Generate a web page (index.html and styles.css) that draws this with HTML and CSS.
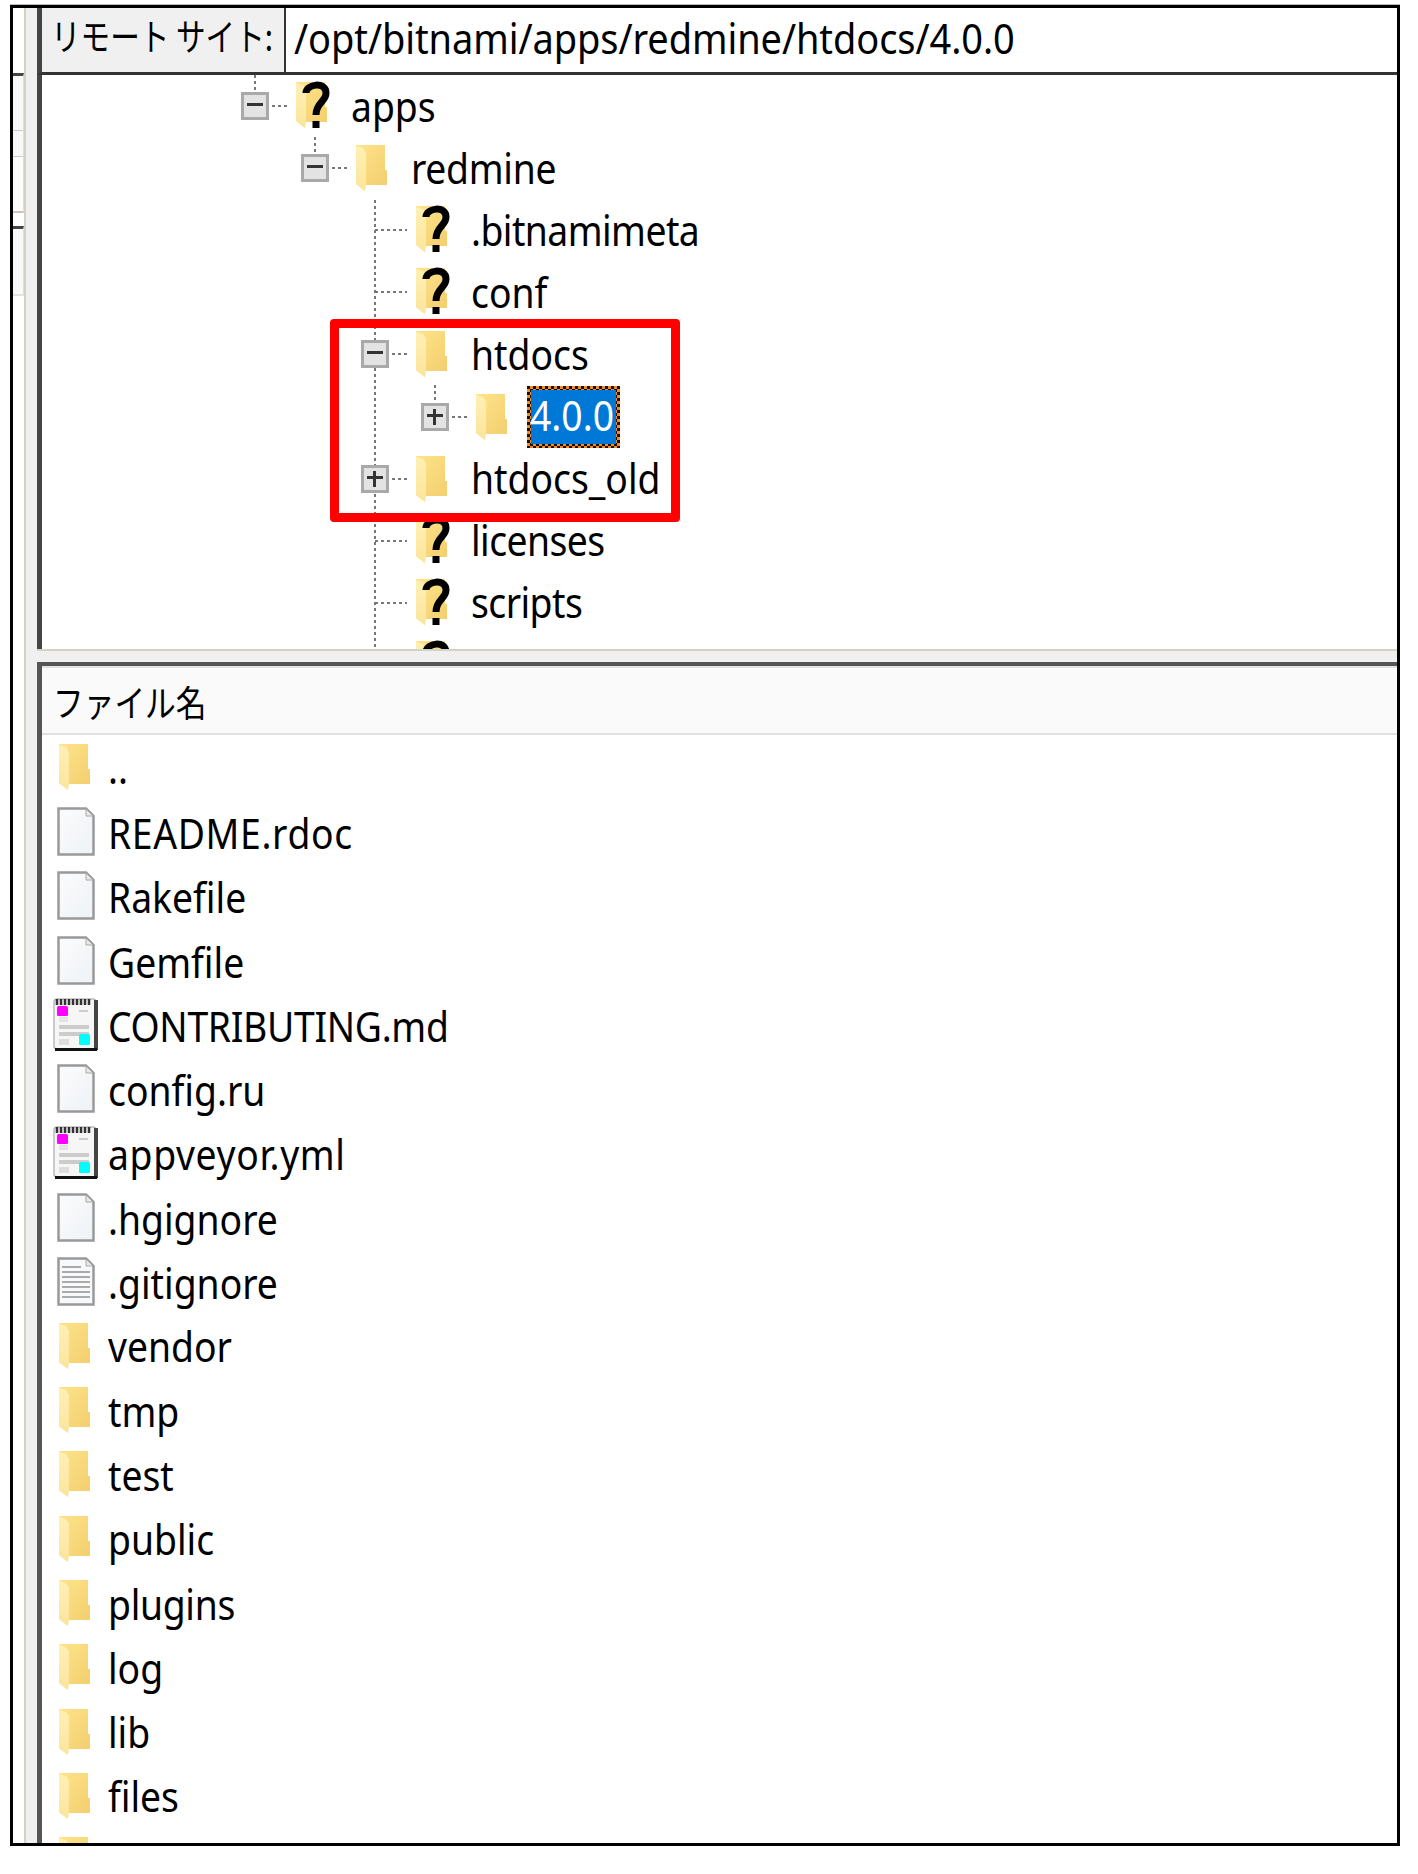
FILE: index.html
```html
<!DOCTYPE html>
<html lang="ja">
<head>
<meta charset="utf-8">
<title>リモート サイト</title>
<link rel="stylesheet" href="styles.css">
</head>
<body>
<svg class="defs" aria-hidden="true">
  <defs>
    <linearGradient id="fg" x1="0" y1="0" x2="1" y2="1">
      <stop offset="0" stop-color="#ffe48c"/>
      <stop offset="1" stop-color="#f2cd6c"/>
    </linearGradient>
    <linearGradient id="pg" x1="0" y1="0" x2="0" y2="1">
      <stop offset="0" stop-color="#fff0b4"/>
      <stop offset="1" stop-color="#fbe59c"/>
    </linearGradient>
    <linearGradient id="docg" x1="0" y1="0" x2="1" y2="1">
      <stop offset="0" stop-color="#fbfcfd"/>
      <stop offset="1" stop-color="#eef2f6"/>
    </linearGradient>
    <symbol id="folder" viewBox="0 0 31 46">
      <path d="M0 0H29V25H31V40H9V46L0 39Z" fill="url(#fg)"/>
      <path d="M0 1L7 3L10 8V40L9 46L0 39Z" fill="url(#pg)"/>
    </symbol>
    <symbol id="qfolder" viewBox="0 0 36 50">
      <path d="M0 1H29V26H31V41H9V47L0 40Z" fill="url(#fg)"/>
      <path d="M0 2L7 4L10 9V41L9 47L0 40Z" fill="url(#pg)"/>
      <path d="M10 12C10 3 30 0 30 12C30 21 20 21 20 34" fill="none" stroke="#000" stroke-width="7"/>
      <rect x="16.500" y="40" width="7" height="7" fill="#000"/>
    </symbol>
    <symbol id="file" viewBox="0 0 38 49">
      <path d="M1.500 1.500H29L36.500 9V47.500H1.500Z" fill="url(#docg)" stroke="#999" stroke-width="2.500"/>
      <path d="M29 2V9H36Z" fill="#e8e8e8" stroke="#aaa" stroke-width="1"/>
    </symbol>
    <symbol id="textfile" viewBox="0 0 38 49">
      <path d="M1.500 1.500H29L36.500 9V47.500H1.500Z" fill="#f8f9fb" stroke="#999" stroke-width="2.500"/>
      <path d="M29 2V9H36Z" fill="#e8e8e8" stroke="#aaa" stroke-width="1"/>
      <path d="M5 10H24M5 15H33M5 20H33M5 25H33M5 30H33M5 35H33M5 40H33" stroke="#aaa" stroke-width="2" fill="none"/>
    </symbol>
    <symbol id="note" viewBox="0 0 45 53">
      <rect x="1" y="1" width="42" height="50" rx="3" fill="#f6f6f6" stroke="#bbb" stroke-width="1.500"/>
      <path d="M41 2H45V52H41Z" fill="#444"/>
      <path d="M2 50H44V53H2Z" fill="#111"/>
      <path d="M4 1V7M8 1V7M12 1V7M16 1V7M20 1V7M24 1V7M28 1V7M32 1V7M36 1V7" stroke="#333" stroke-width="2.500"/>
      <path d="M26 13H35" stroke="#ccc" stroke-width="2"/>
      <rect x="6" y="19" width="9" height="5" fill="#e4e4e4"/>
      <rect x="6" y="27" width="30" height="4" fill="#ccc"/>
      <rect x="6" y="34" width="30" height="4" fill="#ccc"/>
      <rect x="6" y="41" width="10" height="6" fill="#ddd"/>
      <rect x="4" y="8" width="11" height="10" rx="1.500" fill="#ff00ff"/>
      <rect x="26" y="36" width="11" height="11" rx="1.500" fill="#00ffff"/>
    </symbol>
  </defs>
</svg>

<div class="frame">
  <div class="side">
    <div class="side-top"></div>
    <div class="side-cell side-a"></div>
    <div class="side-cell side-b"></div>
    <div class="side-cell side-c"></div>
    <div class="side-gap"></div>
    <div class="side-cell side-d"></div>
  </div>
  <div class="rail"></div>

  <div class="main">
    <div class="pathbar">
      <div class="pathlabel"><span class="txt cjk">リモート サイト:</span></div>
      <div class="pathvalue"><span class="txt path">/opt/bitnami/apps/redmine/htdocs/4.0.0</span></div>
    </div>

    <div class="tree">
      <div class="guide guide-a"></div>
      <div class="guide guide-b"></div>
      <div class="guide guide-c"></div>
      <div class="guide guide-d"></div>

      <div class="node d0"><span class="twist minus"></span><span class="dash"></span><svg class="qicon"><use href="#qfolder"/></svg><span class="txt">apps</span></div>
      <div class="node d1"><span class="twist minus"></span><span class="dash"></span><svg class="ficon"><use href="#folder"/></svg><span class="txt snug">redmine</span></div>
      <div class="node d2"><span class="leaf"></span><svg class="qicon"><use href="#qfolder"/></svg><span class="txt tight">.bitnamimeta</span></div>
      <div class="node d2"><span class="leaf"></span><svg class="qicon"><use href="#qfolder"/></svg><span class="txt">conf</span></div>
      <div class="node d2"><span class="twist minus"></span><span class="dash"></span><svg class="ficon"><use href="#folder"/></svg><span class="txt">htdocs</span></div>
      <div class="node d3"><span class="twist plus"></span><span class="dash"></span><svg class="ficon ficon-sel"><use href="#folder"/></svg><span class="selected"><span class="txt">4.0.0</span></span></div>
      <div class="node d2"><span class="twist plus"></span><span class="dash"></span><svg class="ficon"><use href="#folder"/></svg><span class="txt">htdocs_old</span></div>
      <div class="node d2"><span class="leaf"></span><svg class="qicon"><use href="#qfolder"/></svg><span class="txt tight">licenses</span></div>
      <div class="node d2"><span class="leaf"></span><svg class="qicon"><use href="#qfolder"/></svg><span class="txt tight">scripts</span></div>
      <div class="node d2"><span class="leaf"></span><svg class="qicon"><use href="#qfolder"/></svg></div>

      <div class="callout"></div>
    </div>

    <div class="splitter"></div>

    <div class="list">
      <div class="list-head"><span class="txt cjk head">ファイル名</span></div>
      <div class="rows">
        <div class="row"><svg class="li-folder"><use href="#folder"/></svg><span class="txt">..</span></div>
        <div class="row"><svg class="li-file"><use href="#file"/></svg><span class="txt low wide">README.rdoc</span></div>
        <div class="row"><svg class="li-file"><use href="#file"/></svg><span class="txt low">Rakefile</span></div>
        <div class="row"><svg class="li-file"><use href="#file"/></svg><span class="txt low">Gemfile</span></div>
        <div class="row"><svg class="li-note"><use href="#note"/></svg><span class="txt low snug">CONTRIBUTING.md</span></div>
        <div class="row"><svg class="li-file"><use href="#file"/></svg><span class="txt low">config.ru</span></div>
        <div class="row"><svg class="li-note"><use href="#note"/></svg><span class="txt low wide">appveyor.yml</span></div>
        <div class="row"><svg class="li-file"><use href="#file"/></svg><span class="txt low">.hgignore</span></div>
        <div class="row"><svg class="li-file"><use href="#textfile"/></svg><span class="txt low">.gitignore</span></div>
        <div class="row"><svg class="li-folder"><use href="#folder"/></svg><span class="txt">vendor</span></div>
        <div class="row"><svg class="li-folder"><use href="#folder"/></svg><span class="txt">tmp</span></div>
        <div class="row"><svg class="li-folder"><use href="#folder"/></svg><span class="txt">test</span></div>
        <div class="row"><svg class="li-folder"><use href="#folder"/></svg><span class="txt">public</span></div>
        <div class="row"><svg class="li-folder"><use href="#folder"/></svg><span class="txt snug">plugins</span></div>
        <div class="row"><svg class="li-folder"><use href="#folder"/></svg><span class="txt">log</span></div>
        <div class="row"><svg class="li-folder"><use href="#folder"/></svg><span class="txt">lib</span></div>
        <div class="row"><svg class="li-folder"><use href="#folder"/></svg><span class="txt">files</span></div>
        <div class="row"><svg class="li-folder"><use href="#folder"/></svg></div>
      </div>
    </div>
  </div>
</div>
</body>
</html>
```
FILE: styles.css
```css
* { box-sizing: border-box; }
html, body { margin: 0; padding: 0; background: #fff; }
body { width: 1418px; height: 1874px; overflow: hidden; font-family: "Noto Sans", "Noto Sans CJK JP", sans-serif; color: #000; }
.defs { width: 0; height: 0; position: absolute; }

.frame {
  display: flex;
  width: 1390px;
  height: 1841px;
  margin: 5px 0 0 10px;
  border: 3px solid #000;
  box-shadow: 0 -1px #bbb;
  background: #fff;
}

/* narrow clipped pane on the far left */
.side { width: 11px; flex: none; display: flex; flex-direction: column; }
.side-top { height: 65px; border-bottom: 0; }
.side-cell { background: #f9f9f9; border-right: 1px solid #ddd; }
.side-a { height: 58px; border-top: 3px solid #444; border-bottom: 1px solid #ccc; }
.side-b { height: 26px; border-bottom: 1px solid #ccc; }
.side-c { height: 56px; background: #fcfcfc; border-bottom: 2px solid #c8c6bb; }
.side-gap { height: 13px; }
.side-d { height: 70px; border-top: 3px solid #444; border-bottom: 2px solid #e2e2e2; }

.rail { width: 13px; flex: none; border-left: 2px solid #d4d2c6; background: #f0f0f0; }

.main { flex: 1; min-width: 0; display: flex; flex-direction: column; }

.txt {
  display: inline-block;
  font-size: 37.300px;
  line-height: 52px;
  white-space: pre;
  transform: scaleY(1.13);
}
.wide { letter-spacing: 0.650px; }
.snug { letter-spacing: -0.300px; }
.tight { letter-spacing: -0.550px; }
.cjk { font-family: "Noto Sans CJK JP", sans-serif; font-size: 29.600px; transform: scaleY(1.25); }
.head { font-size: 30.700px; transform: scaleY(1.2); }

.pathbar { display: flex; height: 67px; flex: none; border-left: 5px solid #444; border-bottom: 3px solid #333; }
.pathlabel { width: 244px; flex: none; background: #f0f0f0; border-right: 2px solid #333; padding: 0 0 8px 9px; display: flex; align-items: center; }
.pathvalue { flex: 1; display: flex; align-items: center; padding: 0 0 7px 8px; }
.path { font-size: 38px; transform: scaleY(1.11); letter-spacing: -0.080px; }

.tree { position: relative; height: 574px; flex: none; border-left: 5px solid #444; overflow: hidden; background: #fff; }
.node { display: flex; align-items: center; height: 62.100px; position: relative; }
.node .txt { margin-bottom: 1px; }
.d0 { padding-left: 199px; }
.d1 { padding-left: 259px; }
.d2 { padding-left: 319px; }
.d3 { padding-left: 379px; }

.twist { width: 28px; height: 28px; flex: none; border: 3px solid #a9a9a9; background: #e3e3e3; position: relative; z-index: 1; }
.minus::before, .plus::before { content: ""; position: absolute; left: 3px; right: 3px; top: 8px; height: 3px; background: #333; }
.plus::after { content: ""; position: absolute; top: 3px; bottom: 3px; left: 9px; width: 3px; background: #333; }

.dash, .leaf { height: 2px; flex: none; background: repeating-linear-gradient(90deg, #777 0 3px, transparent 3px 6px); }
.dash { width: 15px; margin: 0 9px 0 3px; }
.leaf { width: 32px; margin: 0 9px 0 14px; }

.ficon { width: 31px; height: 46px; flex: none; margin-right: 24px; }
.ficon-sel { margin-right: 20px; }
.qicon { width: 36px; height: 50px; flex: none; margin-right: 19px; }

.selected {
  display: flex; align-items: center;
  height: 62px; width: 93px; padding-left: 0;
  border: 4px solid transparent;
  background:
    linear-gradient(#0078d7, #0078d7) padding-box,
    repeating-conic-gradient(#f98a1d 0 25%, #111 0 50%) 0 0 / 6px 6px border-box;
  color: #fff;
}
.node .selected .txt { margin: 0 0 3px -1px; }

.guide { position: absolute; width: 2px; background: repeating-linear-gradient(180deg, #777 0 3px, transparent 3px 6px); }
.guide-a { left: 212px; top: 0; height: 17px; }
.guide-b { left: 272px; top: 62px; height: 15px; }
.guide-c { left: 332px; top: 125px; bottom: 0; }
.guide-d { left: 392px; top: 310px; height: 16px; }

.callout { position: absolute; left: 288px; top: 244px; width: 350px; height: 203px; border: 9px solid #f00; border-radius: 4px; z-index: 2; }

.splitter { height: 13px; flex: none; background: #f0f0f0; border-top: 2px solid #d4d2c6; }

.list { flex: 1; min-height: 0; border-left: 5px solid #555; border-top: 4px solid #555; overflow: hidden; display: flex; flex-direction: column; }
.list-head { height: 69px; flex: none; background: #fafafa; border-top: 2px solid #e2e2e2; border-bottom: 2px solid #e0e0e0; padding-left: 11px; display: flex; align-items: center; }
.rows { flex: 1; min-height: 0; overflow: hidden; }
.row { display: flex; align-items: center; height: 64.300px; padding-left: 11px; }
.row .txt { margin-top: 1px; }
.row .low { margin-top: 3px; }
.li-folder { width: 31px; height: 46px; flex: none; margin: 0 18px 0 6px; }
.li-file { width: 38px; height: 49px; flex: none; margin: 0 13px 0 4px; }
.li-note { width: 45px; height: 53px; flex: none; margin-right: 10px; }
```
